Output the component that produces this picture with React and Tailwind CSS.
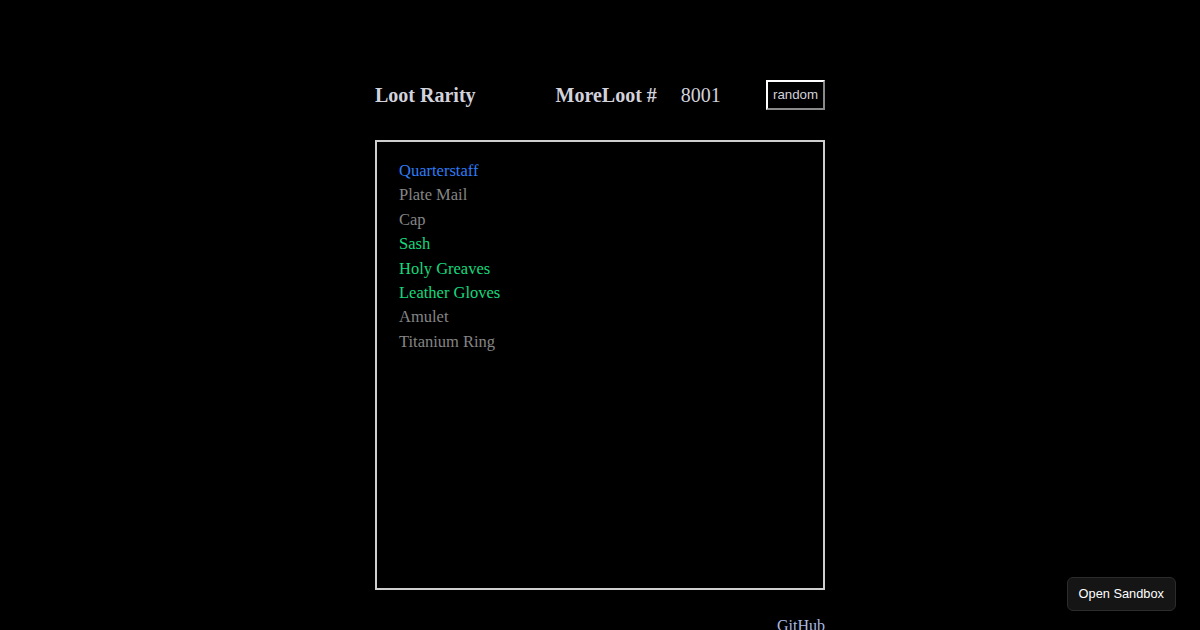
import React from 'react'

const items = [
  { name: 'Quarterstaff', color: 'text-[#2f7bf5]' },
  { name: 'Plate Mail', color: 'text-[#858585]' },
  { name: 'Cap', color: 'text-[#858585]' },
  { name: 'Sash', color: 'text-[#16d97c]' },
  { name: 'Holy Greaves', color: 'text-[#16d97c]' },
  { name: 'Leather Gloves', color: 'text-[#16d97c]' },
  { name: 'Amulet', color: 'text-[#858585]' },
  { name: 'Titanium Ring', color: 'text-[#858585]' },
]

const serif = { fontFamily: '"Liberation Serif", "Times New Roman", serif' }
const sans = { fontFamily: '"Liberation Sans", Arial, sans-serif' }

export default function App() {
  return (
    <div className="min-h-screen bg-black text-[#d2d2dc]" style={serif}>
      <div className="mx-auto w-[450px] pt-[80px]">
        {/* header */}
        <div className="flex h-[30px] items-center">
          <h1 className="text-[20px] font-bold leading-[23px]">Loot Rarity</h1>
          <div className="ml-[80px] flex flex-1 items-center">
            <span className="text-[20px] font-bold leading-[23px]">MoreLoot #</span>
            <input
              defaultValue="8001"
              className="ml-[24px] w-[75px] bg-transparent text-[20px] leading-[23px] text-[#d2d2dc] outline-none"
              style={serif}
            />
            <button
              className="ml-auto h-[30px] w-[59px] border-2 border-t-white border-l-white border-r-[#8a8a8a] border-b-[#8a8a8a] bg-black text-[13.3px] text-[#d2d2dc]"
              style={sans}
            >
              random
            </button>
          </div>
        </div>

        {/* item list */}
        <div className="mt-[30px] h-[450px] border-2 border-[#cfcfcf] px-[22px] pt-[17px]">
          <ul>
            {items.map((item) => (
              <li key={item.name} className={`text-[16.5px] leading-[24.4px] ${item.color}`}>
                {item.name}
              </li>
            ))}
          </ul>
        </div>

        <div className="mt-[27px] flex justify-end">
          <a href="#" className="text-[16px] leading-[18px] text-[#a9b8e0]">GitHub</a>
        </div>
      </div>

      <button
        className="fixed bottom-[19px] right-[24px] h-[34px] rounded-md border border-[#2c2c2c] bg-[#151515] px-[11px] text-[12.8px] text-white"
        style={sans}
      >
        Open Sandbox
      </button>
    </div>
  )
}
